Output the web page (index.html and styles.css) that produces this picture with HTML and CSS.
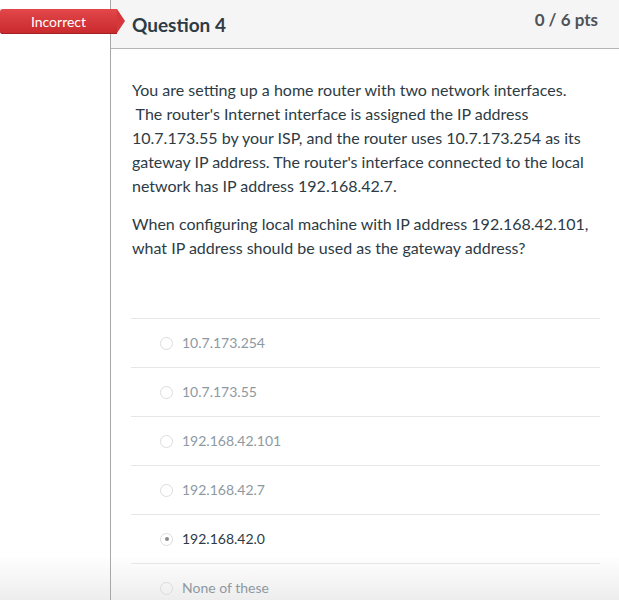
FILE: index.html
```html
<!DOCTYPE html>
<html>
<head>
<meta charset="utf-8">
<link rel="stylesheet" href="styles.css">
</head>
<body>
<div class="page">
  <div class="gutter">
    <div class="badge"><span class="badge-text">Incorrect</span></div>
  </div>
  <div class="question">
    <div class="q-header">
      <h2 class="q-title">Question 4</h2>
      <div class="q-points">0 / 6 pts</div>
    </div>
    <div class="q-body">
      <p class="q-text">You are setting up a home router with two network interfaces. &nbsp;The router's Internet interface is assigned the IP address 10.7.173.55 by your ISP, and the router uses 10.7.173.254 as its gateway IP address. The router's interface connected to the local network has IP address 192.168.42.7.</p>
      <p class="q-text">When configuring local machine with IP address 192.168.42.101, what IP address should be used as the gateway address?</p>
    </div>
    <div class="answers">
      <div class="answer"><span class="radio"></span><span class="answer-text">10.7.173.254</span></div>
      <div class="answer"><span class="radio"></span><span class="answer-text">10.7.173.55</span></div>
      <div class="answer"><span class="radio"></span><span class="answer-text">192.168.42.101</span></div>
      <div class="answer"><span class="radio"></span><span class="answer-text">192.168.42.7</span></div>
      <div class="answer selected"><span class="radio"></span><span class="answer-text">192.168.42.0</span></div>
      <div class="answer"><span class="radio"></span><span class="answer-text">None of these</span></div>
    </div>
  </div>
</div>
</body>
</html>
```
FILE: styles.css
```css
html, body {
  margin: 0;
  padding: 0;
}
html {
  background: #eeeeee;
}
body {
  font-family: Lato, "Noto Sans", sans-serif;
  color: #2d3b45;
  height: 600px;
  overflow: hidden;
  background: linear-gradient(to bottom, #ffffff 0, #ffffff 555px, #ededed 600px);
}
.page {
  display: flex;
  min-height: 600px;
}
.gutter {
  width: 110px;
  flex: 0 0 110px;
  position: relative;
}
.badge {
  position: absolute;
  left: 0;
  top: 9px;
  width: 117px;
  height: 25px;
  border-radius: 3px 0 0 3px;
  background: linear-gradient(#e2474a, #c8292c);
  box-shadow: inset 0 -1px 0 #a51f22;
  display: flex;
  align-items: center;
  justify-content: center;
  z-index: 2;
}
.badge::after {
  content: "";
  position: absolute;
  right: -8px;
  top: 0;
  width: 0;
  height: 0;
  border-top: 12.5px solid transparent;
  border-bottom: 12.5px solid transparent;
  border-left: 8px solid #d5373a;
}
.badge-text {
  color: #ffffff;
  font-size: 14px;
  line-height: 25px;
}
.question {
  flex: 1;
  border-left: 1px solid #a8a8a8;
}
.q-header {
  height: 48px;
  background: #f5f5f5;
  border-bottom: 1px solid #b5b5b5;
  display: flex;
  justify-content: space-between;
  align-items: flex-start;
  padding: 0 21px 0 21px;
}
.q-title {
  margin: 13px 0 0 0;
  font-size: 19px;
  line-height: 24px;
  font-weight: bold;
  color: #2d3b45;
}
.q-points {
  margin-top: 8px;
  font-size: 17px;
  line-height: 24px;
  font-weight: bold;
  color: #4f5358;
}
.q-body {
  padding: 29px 20px 0 21px;
}
.q-text {
  margin: 0 0 14px 0;
  font-size: 16px;
  line-height: 24px;
}
.answers {
  margin: 58px 19px 0 20px;
}
.answer {
  height: 48px;
  border-top: 1px solid #e6e6e6;
  display: flex;
  align-items: center;
  padding-left: 29px;
}
.radio {
  width: 11px;
  height: 11px;
  border: 1px solid #dcdcdc;
  border-radius: 50%;
  display: flex;
  align-items: center;
  justify-content: center;
  margin-right: 9px;
}
.selected .radio::after {
  content: "";
  width: 4px;
  height: 4px;
  border-radius: 50%;
  background: #8a8a8a;
}
.answer-text {
  font-size: 14px;
  line-height: 20px;
  color: #8e99a1;
}
.selected .answer-text {
  color: #2d3b45;
}
```
